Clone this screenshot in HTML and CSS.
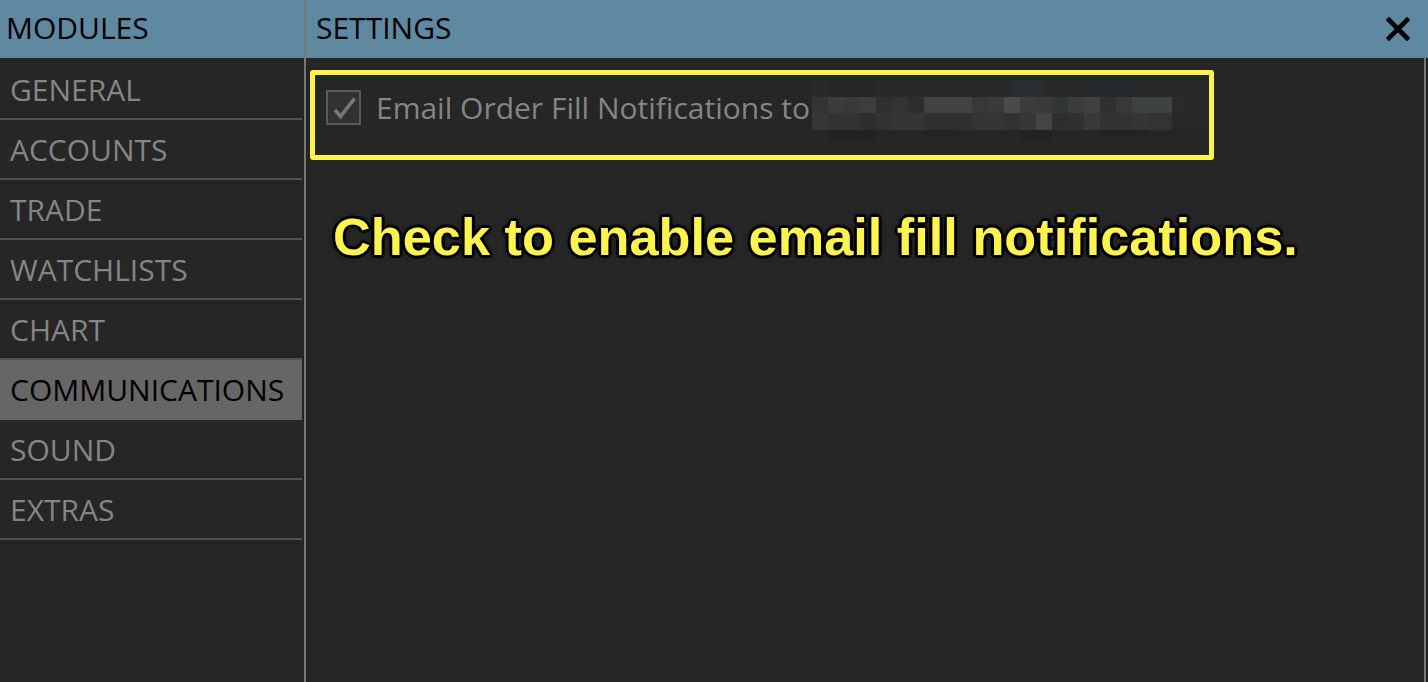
FILE: index.html
```html
<!DOCTYPE html>
<html lang="en">
<head>
    <meta charset="UTF-8">
    <meta name="viewport" content="width=device-width, initial-scale=1.0">
    <title>Settings</title>
    <link rel="stylesheet" href="styles.css">
</head>
<body>
    <div class="window">
        <!-- Module list -->
        <aside class="modules">
            <div class="pane-header">
                <span class="pane-title">MODULES</span>
            </div>
            <ul class="module-list">
                <li class="module-item">GENERAL</li>
                <li class="module-item">ACCOUNTS</li>
                <li class="module-item">TRADE</li>
                <li class="module-item">WATCHLISTS</li>
                <li class="module-item">CHART</li>
                <li class="module-item active">COMMUNICATIONS</li>
                <li class="module-item">SOUND</li>
                <li class="module-item">EXTRAS</li>
            </ul>
        </aside>

        <!-- Settings for the selected module -->
        <main class="settings">
            <div class="pane-header settings-header">
                <span class="pane-title">SETTINGS</span>
                <button class="close-btn" type="button" aria-label="Close">
                    <svg width="24" height="24" viewBox="0 0 24 24">
                        <path d="M3 3 L21 21 M21 3 L3 21" stroke="#000" stroke-width="4.6" stroke-linecap="square" fill="none"/>
                    </svg>
                </button>
            </div>
            <div class="settings-body">
                <div class="highlight-box">
                    <label class="option-row">
                        <span class="check-box">
                            <svg width="35" height="35" viewBox="0 0 35 35">
                                <path d="M9 20 L14.5 26.5 L28.5 8.5" stroke="#787878" stroke-width="3.6" fill="none" stroke-linejoin="miter"/>
                            </svg>
                        </span>
                        <span class="option-label">Email Order Fill Notifications to</span>
                        <!-- address is pixelated -->
                        <svg class="masked-address" width="396" height="60" viewBox="0 0 396 60">
                            <rect x="0" y="0" width="396" height="17" fill="#28292a"/>
                            <rect x="16" y="0" width="48" height="17" fill="#242627"/>
                            <rect x="200" y="0" width="32" height="17" fill="#2a2d2f"/>
                            <rect x="280" y="0" width="48" height="17" fill="#272a2c"/>
                            <rect x="360" y="0" width="36" height="17" fill="#262829"/>

                            <rect x="0" y="17" width="16" height="16" fill="#333"/>
                            <rect x="16" y="17" width="16" height="16" fill="#3c3c3c"/>
                            <rect x="32" y="17" width="16" height="16" fill="#393939"/>
                            <rect x="48" y="17" width="16" height="16" fill="#3d3d3d"/>
                            <rect x="64" y="17" width="16" height="16" fill="#303030"/>
                            <rect x="80" y="17" width="16" height="16" fill="#333"/>
                            <rect x="96" y="17" width="16" height="16" fill="#2e2c2d"/>
                            <rect x="112" y="17" width="48" height="16" fill="#424242"/>
                            <rect x="160" y="17" width="16" height="16" fill="#383838"/>
                            <rect x="176" y="17" width="16" height="16" fill="#3a3a3a"/>
                            <rect x="192" y="17" width="16" height="16" fill="#4a4a4a"/>
                            <rect x="208" y="17" width="16" height="16" fill="#3c3c3c"/>
                            <rect x="224" y="17" width="16" height="16" fill="#3a3a3a"/>
                            <rect x="240" y="17" width="16" height="16" fill="#333636"/>
                            <rect x="256" y="17" width="16" height="16" fill="#3c3c3c"/>
                            <rect x="272" y="17" width="16" height="16" fill="#404040"/>
                            <rect x="288" y="17" width="16" height="16" fill="#303030"/>
                            <rect x="304" y="17" width="16" height="16" fill="#383838"/>
                            <rect x="320" y="17" width="40" height="16" fill="#3e4242"/>
                            <rect x="360" y="17" width="16" height="16" fill="#2a2a2a"/>
                            <rect x="376" y="17" width="20" height="16" fill="#282828"/>

                            <rect x="0" y="33" width="16" height="17" fill="#363636"/>
                            <rect x="16" y="33" width="32" height="17" fill="#323232"/>
                            <rect x="48" y="33" width="16" height="17" fill="#2f2c2b"/>
                            <rect x="64" y="33" width="16" height="17" fill="#323232"/>
                            <rect x="80" y="33" width="32" height="17" fill="#353535"/>
                            <rect x="112" y="33" width="48" height="17" fill="#2f2f2f"/>
                            <rect x="160" y="33" width="32" height="17" fill="#353535"/>
                            <rect x="192" y="33" width="16" height="17" fill="#323030"/>
                            <rect x="208" y="33" width="16" height="17" fill="#373737"/>
                            <rect x="224" y="33" width="16" height="17" fill="#444"/>
                            <rect x="240" y="33" width="16" height="17" fill="#2e2e2e"/>
                            <rect x="256" y="33" width="16" height="17" fill="#2f3031"/>
                            <rect x="272" y="33" width="16" height="17" fill="#393939"/>
                            <rect x="288" y="33" width="32" height="17" fill="#323232"/>
                            <rect x="320" y="33" width="16" height="17" fill="#353535"/>
                            <rect x="336" y="33" width="24" height="17" fill="#333"/>
                            <rect x="360" y="33" width="36" height="17" fill="#282828"/>

                            <rect x="0" y="50" width="360" height="10" fill="#262626"/>
                            <rect x="16" y="50" width="48" height="10" fill="#222"/>
                            <rect x="112" y="50" width="32" height="10" fill="#242424"/>
                            <rect x="208" y="50" width="32" height="10" fill="#222"/>
                            <rect x="288" y="50" width="48" height="10" fill="#232323"/>
                        </svg>
                    </label>
                </div>
                <p class="callout">Check to enable email fill notifications.</p>
            </div>
        </main>
    </div>
</body>
</html>
```

FILE: styles.css
```css
/* Settings window */
html, body {
    margin: 0;
    height: 100%;
    background-color: #1c1c1c;
}

body {
    font-family: "Open Sans", "Noto Sans", sans-serif;
    overflow: hidden;
}

.window {
    display: flex;
    height: 100%;
    width: calc(100% - 2px);
    background-color: #262626;
}

.pane-header {
    height: 58px;
    box-sizing: border-box;
    padding-bottom: 4px;
    background-color: #5f88a1;
    display: flex;
    align-items: center;
}

.pane-title {
    font-size: 30px;
    color: #000;
}

/* Left column */
.modules {
    width: 304px;
    border-right: 2px solid #777;
    flex-shrink: 0;
}

.modules .pane-title {
    padding-left: 6px;
}

.module-list {
    list-style: none;
    margin: 0;
    padding: 2px 2px 0 0;
}

.module-item {
    height: 58px;
    line-height: 60px;
    padding-left: 10px;
    font-size: 30px;
    color: #858585;
    border-bottom: 2px solid #505050;
    overflow: hidden;
}

.module-item.active {
    background-color: #666;
    color: #000;
    border-bottom-color: #666;
}

/* Right column */
.settings {
    flex: 1;
    display: flex;
    flex-direction: column;
    min-width: 0;
}

.settings-header {
    justify-content: space-between;
    padding: 0 18px 4px 10px;
    margin-right: -2px;
}

.close-btn {
    border: none;
    background: none;
    padding: 0;
    margin-top: 4px;
    width: 24px;
    height: 24px;
    cursor: pointer;
}

.close-btn svg {
    display: block;
}

.settings-body {
    flex: 1;
    border-right: 2px solid #777;
}

.highlight-box {
    margin: 12px 0 0 4px;
    width: 894px;
    height: 80px;
    border: 5px solid #fff24f;
    border-radius: 3px;
    box-sizing: content-box;
}

.option-row {
    display: flex;
    align-items: center;
    padding: 5px 11px 15px;
}

.check-box {
    width: 31px;
    height: 31px;
    border: 2px solid #595959;
    background-color: #323232;
    margin-bottom: 5px;
    position: relative;
    flex-shrink: 0;
}

.check-box svg {
    position: absolute;
    left: -2px;
    top: -2px;
}

.option-label {
    margin-left: 15px;
    font-size: 30px;
    color: #858585;
    white-space: nowrap;
    flex-shrink: 0;
    margin-bottom: 6px;
}

.masked-address {
    display: block;
    margin-left: 2px;
    flex-shrink: 0;
}

/* Yellow note under the option */
.callout {
    margin: 47px 0 0 27px;
    font-family: "Liberation Sans", Arial, sans-serif;
    font-weight: bold;
    font-size: 52.3px;
    color: #fff350;
    white-space: nowrap;
    text-shadow:
        -3px 0 0 #000, 3px 0 0 #000, 0 -3px 0 #000, 0 3px 0 #000,
        -2px -2px 0 #000, 2px -2px 0 #000, -2px 2px 0 #000, 2px 2px 0 #000,
        0 0 6px rgba(0, 0, 0, 0.8);
}
```
